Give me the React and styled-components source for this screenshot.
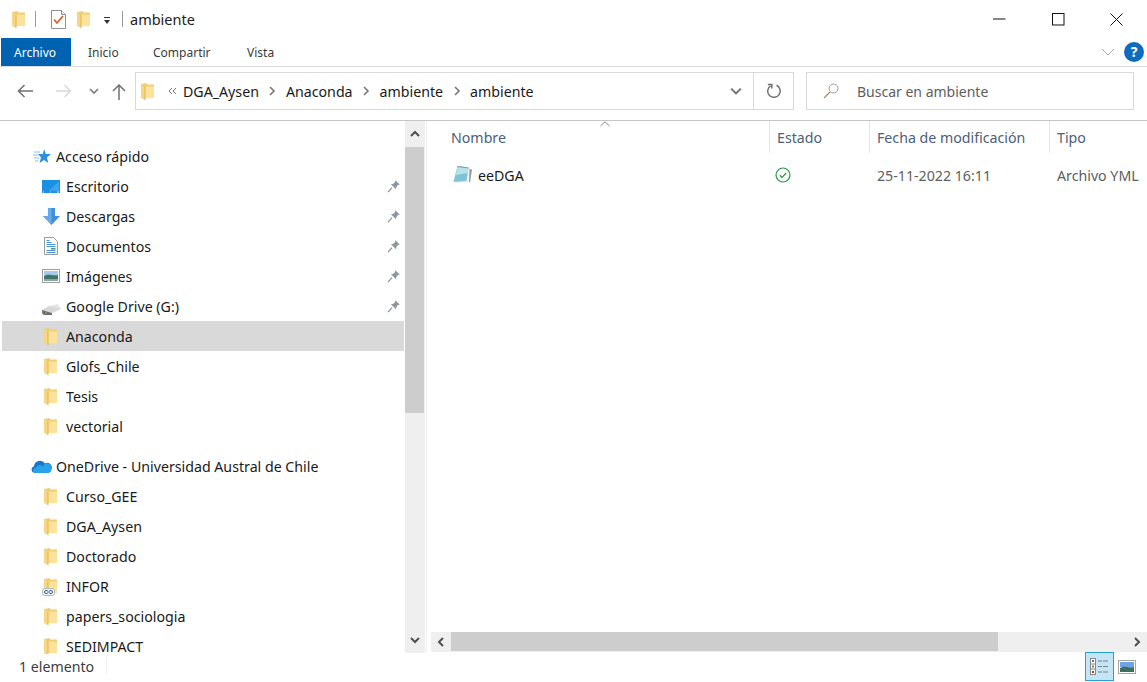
import React from "react";
import styled, { createGlobalStyle } from "styled-components";

const Global = createGlobalStyle`
  html, body { margin: 0; padding: 0; background: #fff; overflow: hidden; }
  #root { width: 1147px; height: 682px; }
  * { box-sizing: border-box; }
`;

const Window = styled.div`
  width: 1147px; height: 682px; display: flex; flex-direction: column;
  font-family: "Noto Sans", "Open Sans", sans-serif; font-size: 14.2px; color: #1a1a1a; overflow: hidden; background: #fff;
`;
const TitleBar = styled.div`height: 38px; display: flex; align-items: center; padding-left: 12px; flex: none;`;
const QuickIcon = styled.span`display: flex; margin-left: ${p => p.$ml || 0}px; padding-top: ${p => p.$pt || 0}px;`;
const TitleSep = styled.span`width: 1px; height: 16px; background: #9a9a9a; margin-left: ${p => p.$ml}px;`;
const TitleText = styled.span`margin-left: 7px; font-size: 14.5px; color: #222; flex: 1; line-height: 38px;`;
const WinBtn = styled.span`width: 58.5px; height: 38px; display: flex; align-items: center; justify-content: center;`;
const Controls = styled.div`display: flex; margin-right: 1px;`;

const Ribbon = styled.div`height: 29px; display: flex; align-items: stretch; padding-left: 1px; border-bottom: 1px solid #dadada; flex: none;`;
const Tab = styled.div`
  font-size: 12px; display: flex; align-items: center; height: 28px;
  width: ${p => p.$w}px; padding-left: ${p => p.$pl}px;
  background: ${p => p.$active ? "#0063b1" : "transparent"};
  color: ${p => p.$active ? "#fff" : "#3b3b3b"};
`;
const RibbonRight = styled.div`margin-left: auto; display: flex; align-items: center; gap: 9px; padding-right: 3px;`;

const NavRow = styled.div`height: 54px; display: flex; align-items: center; flex: none; border-bottom: 1px solid #c6c6c6; padding-left: 17px; padding-bottom: 5px;`;
const NavBtn = styled.span`display: flex; margin-left: ${p => p.$ml || 0}px;`;
const AddressBox = styled.div`
  width: 659px; height: 38px; margin-left: 9px; border: 1px solid #d9d9d9; display: flex; align-items: center;
  padding-left: 5px; color: #1a1a1a;
`;
const Crumb = styled.span`line-height: 38px; height: 36px;`;
const Sep = styled.span`display: flex; margin: 0 ${p => p.$mr || 8.5}px 0 ${p => p.$ml || 8.5}px;`;
const AddressEnd = styled.div`margin-left: auto; display: flex; align-items: center; height: 100%;`;
const Refresh = styled.div`width: 40px; height: 100%; border-left: 1px solid #d9d9d9; display: flex; align-items: center; justify-content: center; margin-left: 11px;`;
const SearchBox = styled.div`
  width: 328px; height: 38px; margin-left: 12px; border: 1px solid #d9d9d9; display: flex; align-items: center;
  padding-left: 16px; color: #5d5d5d;
`;
const SearchText = styled.span`margin-left: 18px; font-size: 14px;`;

const Body = styled.div`flex: 1; display: flex; min-height: 0;`;
const Sidebar = styled.div`width: 405px; padding: 20px 1px 0 2px; overflow: hidden; flex: none;`;
const Group = styled.div`margin-bottom: 10px;`;
const Row = styled.div`
  height: 30px; display: flex; align-items: center;
  padding-left: ${p => p.$head ? 29 : 39}px;
  background: ${p => p.$sel ? "#d9d9d9" : "transparent"};
  white-space: nowrap; color: #1a1a1a;
`;
const RowIcon = styled.span`width: 25px; flex: none; display: flex; align-items: center; padding-left: ${p => p.$in || 0}px;`;
const Pin = styled.span`margin-left: auto; margin-right: 3px; display: flex;`;

const VScroll = styled.div`width: 20px; flex: none; display: flex; flex-direction: column; background: #efefef; margin-bottom: 1px;`;
const VArrow = styled.div`height: 26px; display: flex; align-items: center; justify-content: center; flex: none;`;
const VThumb = styled.div`height: 266px; background: #cdcdcd; flex: none; width: 19px;`;
const VTrack = styled.div`flex: 1;`;
const Divider = styled.div`width: 2px; flex: none; border-right: 1px solid #efefef; margin-bottom: 1px;`;

const Main = styled.div`flex: 1; min-width: 0; display: flex; flex-direction: column; position: relative;`;
const Header = styled.div`height: 32px; display: flex; flex: none; padding-left: 16px; color: #4c607a;`;
const Col = styled.div`
  width: ${p => p.$w}px; flex: none; padding-left: ${p => p.$pl}px; height: 32px; line-height: 34px; white-space: nowrap;
  border-right: ${p => p.$last ? 0 : "1px solid #e5e5e5"}; overflow: hidden;
`;
const SortCaret = styled.span`position: absolute; left: 173px; top: 0; display: flex;`;
const Files = styled.div`flex: 1; padding-top: 7px;`;
const FileRow = styled.div`height: 30px; display: flex; align-items: center; padding-left: 26px; white-space: nowrap;`;
const FileName = styled.span`width: 297px; margin-left: 5px;`;
const FileStatus = styled.span`width: 102px; display: flex;`;
const FileDate = styled.span`width: 180px; color: #5d5d5d;`;
const FileType = styled.span`color: #5d5d5d;`;

const HScroll = styled.div`height: 20px; margin: 0 0 2px 4px; display: flex; background: #efefef; flex: none;`;
const HArrow = styled.div`width: 20px; flex: none; display: flex; align-items: center; justify-content: center; margin-left: ${p => p.$auto ? "auto" : 0};`;
const HThumb = styled.div`width: 547px; background: #cdcdcd; height: 19px;`;

const StatusBar = styled.div`height: 28px; flex: none; display: flex; align-items: center; padding: 0 0 3px 19px; color: #3c3c3c;`;
const StatusSep = styled.span`width: 1px; height: 15px; background: #f0f0f0; margin-left: 12px;`;
const Views = styled.div`margin-left: auto; display: flex; align-items: center; padding-right: 10px;`;
const ViewOn = styled.div`width: 29px; height: 29px; background: #c4e5f6; border: 1px solid #26a0da; display: flex; align-items: center; justify-content: center;`;
const ViewOff = styled.div`margin-left: 4px; width: 19px; display: flex;`;

const Folder = () => (
  <svg width="13" height="17" viewBox="0 0 13 17">
    <path d="M0 1 6 0v1.500h7V15H0z" fill="#f1cd72" />
    <path d="M4 3.500h9V15H4z" fill="#fde29b" />
    <path d="M0 1 4 3.500V17L0 15z" fill="#f5d684" />
    <path d="M3.500 3.200 4.500 3.500V17H3.500z" fill="#e3b350" />
  </svg>
);
const LinkedFolder = () => (
  <span style={{ position: "relative", display: "flex" }}>
    <Folder />
    <svg width="14" height="8" viewBox="0 0 14 8" style={{ position: "absolute", left: -2, top: 10 }}>
      <rect x=".5" y=".5" width="12" height="7" rx="2" fill="#f4f4f4" stroke="#b5b5b5" />
      <path d="M5.500 2.500H4a1.500 1.500 0 0 0 0 3h1.500M7.500 2.500H9a1.500 1.500 0 0 1 0 3H7.500M5 4h3" fill="none" stroke="#1d63a8" />
    </svg>
  </span>
);
const PinIcon = () => (
  <svg width="14" height="14" viewBox="0 0 14 14">
    <path d="M1 13.200 5 8.600" stroke="#8a9299" strokeWidth="1.200" />
    <path d="M8.200 1.200 12.800 5.400 10.900 6 9.300 8.300 9 10.200 3.900 5.300 5.900 5 8 3.200z" fill="#8f979e" />
  </svg>
);
const Chev = ({ dir = "right", color = "#777", w = 1.6, s = 10 }) => {
  const d = { right: "M3 1 7 5 3 9", left: "M7 1 3 5 7 9", down: "M1 3 5 7 9 3", up: "M1 7 5 3 9 7" }[dir];
  return <svg width={s} height={s} viewBox="0 0 10 10"><path d={d} fill="none" stroke={color} strokeWidth={w} /></svg>;
};

const quick = [
  ["Escritorio", 1, <svg width="18" height="13" viewBox="0 0 18 13"><rect width="18" height="13" fill="#1a8fe3" /><path d="M7 11 17 1v10z" fill="#3aa5ef" /><path d="M1 12h1M8 12h1M15 12h2" stroke="#d8f0ff" /></svg>],
  ["Descargas", 2, <svg width="17" height="17" viewBox="0 0 17 17"><path d="M5 0h7v8h5L8.500 17 0 8h5z" fill="#3f8fdc" /><path d="M5 0h3.500v17L0 8h5z" fill="#64abeb" /></svg>],
  ["Documentos", 3, <svg width="14" height="18" viewBox="0 0 14 18"><path d="M.5.500h9l4 4v13H.5z" fill="#fbfbfb" stroke="#9b9b9b" /><path d="M2.500 3.500h3M2.500 5.500h5M2.500 7.500h9M2.500 9.500h9M2.500 13.500h9M2.500 15.500h9" stroke="#4a95d8" /><rect x="7" y="11" width="4.500" height="1.500" fill="#5d8d72" /></svg>],
  ["Imágenes", 1, <svg width="18" height="14" viewBox="0 0 18 14"><rect x=".5" y=".5" width="17" height="13" fill="#fff" stroke="#9e9e9e" /><rect x="2" y="2" width="14" height="5" fill="#a9c9ef" /><path d="M2 7C6 4 10 7 16 6v6H2z" fill="#3f7664" /><rect x="2" y="10" width="14" height="2" fill="#8aa5a5" /></svg>],
  ["Google Drive (G:)", 1, <svg width="19" height="11" viewBox="0 0 19 11" style={{ marginTop: 6 }}><path d="M7 2l9-2 3 5-10 3z" fill="#e6e6e6" /><path d="M0 6l7-4 12 3-9 4z" fill="#d8d8d8" /><path d="M0 6l10 3v2H2L0 9z" fill="#6e6e6e" /><path d="M3 9h2" stroke="#62c552" /></svg>],
];
const quickFolders = ["Anaconda", "Glofs_Chile", "Tesis", "vectorial"];
const drive = ["Curso_GEE", "DGA_Aysen", "Doctorado", "INFOR", "papers_sociologia", "SEDIMPACT"];
const crumbs = ["DGA_Aysen", "Anaconda", "ambiente", "ambiente"];

export default function App() {
  return (
    <Window>
      <Global />
      <TitleBar>
        <QuickIcon><Folder /></QuickIcon>
        <TitleSep $ml={10} />
        <QuickIcon $ml={15}>
          <svg width="15" height="19" viewBox="0 0 15 19"><path d="M.5.500h10l4 4v14H.5z" fill="#fff" stroke="#8f8f8f" /><path d="M10.500.500v4h4" fill="#eee" stroke="#8f8f8f" /><path d="M3 9.500 6 13l6-7" fill="none" stroke="#e0592a" strokeWidth="1.700" /></svg>
        </QuickIcon>
        <QuickIcon $ml={11}><Folder /></QuickIcon>
        <QuickIcon $ml={13} $pt={4}>
          <svg width="8" height="8" viewBox="0 0 8 8"><path d="M1 0h6v1H1zM1 3h6L4 7z" fill="#333" /></svg>
        </QuickIcon>
        <TitleSep $ml={11} />
        <TitleText>ambiente</TitleText>
        <Controls>
          <WinBtn><svg width="13" height="2" viewBox="0 0 13 2"><path d="M0 1h12.500" stroke="#111" /></svg></WinBtn>
          <WinBtn><svg width="13" height="13" viewBox="0 0 13 13"><rect x=".5" y=".5" width="11.500" height="11.500" fill="none" stroke="#111" /></svg></WinBtn>
          <WinBtn><svg width="13" height="13" viewBox="0 0 13 13"><path d="M.5.500l12 12M12.500.500l-12 12" stroke="#111" /></svg></WinBtn>
        </Controls>
      </TitleBar>
      <Ribbon>
        <Tab $active $w={70} $pl={13}>Archivo</Tab>
        <Tab $w={82} $pl={17}>Inicio</Tab>
        <Tab $w={94} $pl={0}>Compartir</Tab>
        <Tab $w={60} $pl={0}>Vista</Tab>
        <RibbonRight>
          <svg width="14" height="8" viewBox="0 0 14 8"><path d="M1 1l6 6 6-6" fill="none" stroke="#a8a8a8" /></svg>
          <svg width="20" height="20" viewBox="0 0 20 20"><circle cx="10" cy="10" r="10" fill="#0f6cbd" /><text x="10" y="15" textAnchor="middle" fontSize="14" fontWeight="700" fill="#fff" fontFamily="Noto Sans">?</text></svg>
        </RibbonRight>
      </Ribbon>
      <NavRow>
        <NavBtn><svg width="16" height="14" viewBox="0 0 16 14"><path d="M16 7H1.500M7.500 1 1.500 7l6 6" fill="none" stroke="#707070" strokeWidth="1.500" /></svg></NavBtn>
        <NavBtn $ml={23}><svg width="16" height="14" viewBox="0 0 16 14"><path d="M0 7h14.500M8.500 1l6 6-6 6" fill="none" stroke="#d8d8d8" strokeWidth="1.500" /></svg></NavBtn>
        <NavBtn $ml={17}><Chev dir="down" color="#7a7a7a" /></NavBtn>
        <NavBtn $ml={13}><svg width="14" height="17" viewBox="0 0 14 17"><path d="M7 17V2M1 8l6-6 6 6" fill="none" stroke="#707070" strokeWidth="1.500" /></svg></NavBtn>
        <AddressBox>
          <Folder />
          <Sep $ml={14} $mr={6}><svg width="9" height="8" viewBox="0 0 9 8"><path d="M4 1 1 4l3 3M8 1 5 4l3 3" fill="none" stroke="#777" /></svg></Sep>
          {crumbs.map((c, i) => (
            <React.Fragment key={i}>
              <Crumb>{c}</Crumb>
              {i < 3 && <Sep><Chev color="#777" /></Sep>}
            </React.Fragment>
          ))}
          <AddressEnd>
            <Chev dir="down" color="#707070" s={12} />
            <Refresh>
              <svg width="16" height="16" viewBox="0 0 16 16"><path d="M10.500 2.300A6.300 6.300 0 1 1 4.500 2.800" fill="none" stroke="#707070" strokeWidth="1.500" /><path d="M1.800 1.500h4v4" fill="none" stroke="#707070" strokeWidth="1.500" /></svg>
            </Refresh>
          </AddressEnd>
        </AddressBox>
        <SearchBox>
          <svg width="16" height="16" viewBox="0 0 16 16"><circle cx="10.500" cy="5.500" r="4.500" fill="none" stroke="#9a9a9a" /><path d="M7 9l-6 6" stroke="#b08a6e" strokeWidth="1.200" /></svg>
          <SearchText>Buscar en ambiente</SearchText>
        </SearchBox>
      </NavRow>
      <Body>
        <Sidebar>
          <Group>
            <Row $head>
              <RowIcon $in={2}><svg width="18" height="15" viewBox="0 0 18 15"><path d="M11 0l1.800 4.900 5.200.2-4.100 3.300 1.400 5.600-4.300-3-4.500 3 1.500-5.600L5 5.100l4.900-.2z" fill="#2f8fe0" /><path d="M1 3h6M0 6h5M1 9h5M2 12h3" stroke="#7fc0f0" /></svg></RowIcon>
              Acceso rápido
            </Row>
            {quick.map(([label, pad, icon]) => (
              <Row key={label}>
                <RowIcon $in={pad}>{icon}</RowIcon>
                {label}
                <Pin><PinIcon /></Pin>
              </Row>
            ))}
            {quickFolders.map(f => (
              <Row key={f} $sel={f === "Anaconda"}>
                <RowIcon $in={3}><Folder /></RowIcon>
                {f}
              </Row>
            ))}
          </Group>
          <Group>
            <Row $head>
              <svg width="21" height="13" viewBox="0 0 21 13" style={{ marginRight: 4 }}><path d="M3.500 13A3.500 3.500 0 0 1 3 6.200 6 6 0 0 1 14 3.500a4.500 4.500 0 0 1 6.500 5.500L17 13z" fill="#1976c9" /><path d="M3.500 13A2.800 2.800 0 0 1 5 7.800 4 4 0 0 1 12 6.500a3 3 0 0 1 8.500 2.500 4 4 0 0 1-3 4z" fill="#29a3e8" /></svg>
              OneDrive - Universidad Austral de Chile
            </Row>
            {drive.map(f => (
              <Row key={f}>
                <RowIcon $in={3}>{f === "INFOR" ? <LinkedFolder /> : <Folder />}</RowIcon>
                {f}
              </Row>
            ))}
          </Group>
        </Sidebar>
        <VScroll>
          <VArrow><Chev dir="up" color="#505050" w={2} /></VArrow>
          <VThumb />
          <VTrack />
          <VArrow><Chev dir="down" color="#505050" w={2} /></VArrow>
        </VScroll>
        <Divider />
        <Main>
          <SortCaret><svg width="10" height="6" viewBox="0 0 10 6"><path d="M.5 5 5 .8 9.500 5" fill="none" stroke="#8a8a8a" /></svg></SortCaret>
          <Header>
            <Col $w={327} $pl={8}>Nombre</Col>
            <Col $w={100} $pl={7}>Estado</Col>
            <Col $w={180} $pl={7}>Fecha de modificación</Col>
            <Col $w={97} $pl={7} $last>Tipo</Col>
          </Header>
          <Files>
            <FileRow>
              <svg width="20" height="18" viewBox="0 0 20 18"><path d="M6 1 19 3l-2 14H3z" fill="#f2f2f2" /><path d="M16.500 3l2.500.5-2 13-1-1z" fill="#9a9a9a" /><path d="M4.500 0 15.500 1.500 13.500 15 .5 16z" fill="#7fc3d6" /><path d="M4.500 0 15.500 1.500 14.800 7 2.800 9z" fill="#b6e2ea" /><path d="M4.500 0 15.500 1.500v1L4 1z" fill="#8a9aa0" /></svg>
              <FileName>eeDGA</FileName>
              <FileStatus><svg width="16" height="16" viewBox="0 0 16 16"><circle cx="8" cy="8" r="7" fill="none" stroke="#1f9b3f" strokeWidth="1.200" /><path d="M4.800 8.200 7 10.300 11.200 6" fill="none" stroke="#1f9b3f" strokeWidth="1.200" /></svg></FileStatus>
              <FileDate>25-11-2022 16:11</FileDate>
              <FileType>Archivo YML</FileType>
            </FileRow>
          </Files>
          <HScroll>
            <HArrow><Chev dir="left" color="#505050" w={2} /></HArrow>
            <HThumb />
            <HArrow $auto><Chev dir="right" color="#505050" w={2} /></HArrow>
          </HScroll>
        </Main>
      </Body>
      <StatusBar>
        1 elemento
        <StatusSep />
        <Views>
          <ViewOn>
            <svg width="19" height="17" viewBox="0 0 19 17"><rect x=".5" y=".5" width="5" height="16" fill="#fff" stroke="#888" /><path d="M0 6h6M0 11h6" stroke="#888" /><rect x="2" y="2" width="2" height="2" fill="#5a7f94" /><rect x="2" y="7.500" width="2" height="2" fill="#8a8a2a" /><rect x="2" y="13" width="2" height="2" fill="#a83a1a" /><path d="M8 3h4M13 3h5M8 8.500h4M13 8.500h5M8 14h4M13 14h5" stroke="#808080" /></svg>
          </ViewOn>
          <ViewOff>
            <svg width="18" height="14" viewBox="0 0 18 14"><rect x=".5" y=".5" width="17" height="13" fill="#fff" stroke="#a5a5a5" /><rect x="2" y="2" width="14" height="5" fill="#6ea3e8" /><path d="M2 8C6 5 10 8 16 7v5H2z" fill="#3e6f5e" /></svg>
          </ViewOff>
        </Views>
      </StatusBar>
    </Window>
  );
}
